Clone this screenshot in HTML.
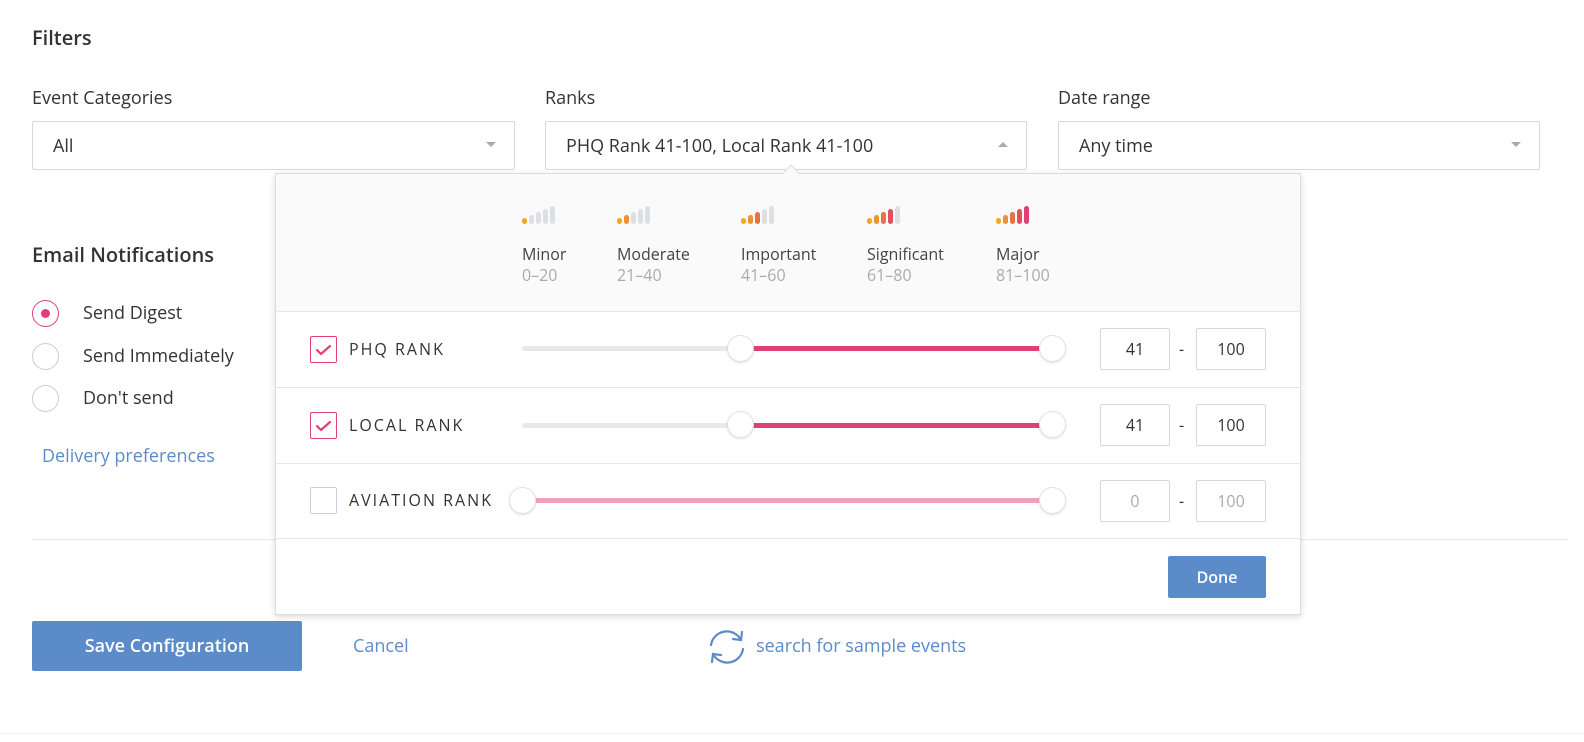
<!DOCTYPE html>
<html><head><style>
*{box-sizing:border-box;margin:0;padding:0}
body{width:1584px;height:742px;background:#fff;font-family:"Open Sans","Liberation Sans","DejaVu Sans",sans-serif;color:#333;position:relative;overflow:hidden}
.a{position:absolute;white-space:nowrap}
.sel{position:absolute;top:121px;height:49px;border:1px solid #d6d9dc;border-radius:2px;font-size:18px;padding:12px 20px;color:#333}
.car{position:absolute;right:18px;top:20px;width:0;height:0;border-left:5px solid transparent;border-right:5px solid transparent;border-top:5px solid #aaa}
.radio{position:absolute;left:32px;width:27px;height:27px;border:1px solid #ccc;border-radius:50%}
.bars{position:absolute;top:206px;height:18px}
.bars i{position:absolute;bottom:0;width:5px;border-radius:3px;background:#dde0e3}
.lvl{position:absolute;top:244px;font-size:16px;color:#444;line-height:21px}
.lvl span{display:block;color:#aaa}
.cb{position:absolute;left:310px;width:27px;height:27px;border:1px solid #e0407a;border-radius:2px}
.lab{position:absolute;left:349px;font-size:16px;letter-spacing:2px;color:#333}
.track{position:absolute;left:522px;width:530px;height:5px;background:#e8e9eb;border-radius:3px}
.fill{position:absolute;height:5px;background:#e0407a}
.th{position:absolute;width:27px;height:27px;border-radius:50%;background:#fff;border:1px solid #e2e2e2;box-shadow:0 1px 2px rgba(0,0,0,.12)}
.inp{position:absolute;width:70px;height:42px;border:1px solid #d6d9dc;border-radius:2px;font-size:16px;text-align:center;line-height:40px;color:#333}
.hr{position:absolute;left:275px;width:1026px;height:1px;background:#e6e6e6}
</style></head><body>
<div class="a" style="left:32px;top:24px;font-size:20px;font-weight:600;color:#333">Filters</div>
<div class="a" style="left:32px;top:86px;font-size:18px">Event Categories</div>
<div class="a" style="left:545px;top:86px;font-size:18px">Ranks</div>
<div class="a" style="left:1058px;top:86px;font-size:18px">Date range</div>
<div class="sel" style="left:32px;width:483px">All<div class="car"></div></div>
<div class="sel" style="left:545px;width:482px">PHQ Rank 41-100, Local Rank 41-100<div class="car" style="border-top:0;border-bottom:5px solid #aaa"></div></div>
<div class="sel" style="left:1058px;width:482px">Any time<div class="car"></div></div>

<div class="a" style="left:32px;top:241px;font-size:20px;font-weight:600">Email Notifications</div>
<div class="radio" style="top:300px;border-color:#e0407a"><div style="position:absolute;left:8px;top:8px;width:9px;height:9px;border-radius:50%;background:#e0407a"></div></div>
<div class="a" style="left:83px;top:301px;font-size:18px">Send Digest</div>
<div class="radio" style="top:343px"></div>
<div class="a" style="left:83px;top:344px;font-size:18px">Send Immediately</div>
<div class="radio" style="top:385px"></div>
<div class="a" style="left:83px;top:386px;font-size:18px">Don't send</div>
<div class="a" style="left:42px;top:444px;font-size:18px;color:#5b8cc9">Delivery preferences</div>
<div class="a" style="left:32px;top:539px;width:1536px;height:1px;background:#e8e8e8"></div>
<div class="a" style="left:32px;top:621px;width:270px;height:50px;background:#5b8cc9;border-radius:2px;color:#fff;font-size:18px;font-weight:600;text-align:center;line-height:50px">Save Configuration</div>
<div class="a" style="left:353px;top:634px;font-size:18px;color:#5b8cc9">Cancel</div>
<svg class="a" style="left:707px;top:627px" width="40" height="40" viewBox="0 0 40 40" fill="none" stroke="#5b8cc9" stroke-width="2.2" stroke-linecap="round"><path d="M4 18A16 16 0 0 1 34 13"/><path d="M35 5L34 13 26 12"/><path d="M36 22A16 16 0 0 1 6 27"/><path d="M5 35L6 27 14 28"/></svg>
<div class="a" style="left:756px;top:634px;font-size:18px;color:#5b8cc9">search for sample events</div>
<div class="a" style="left:0;top:733px;width:1584px;height:1px;background:#eee"></div>

<div class="a" style="left:275px;top:173px;width:1026px;height:442px;background:#fff;border:1px solid #ddd;box-shadow:0 2px 6px rgba(0,0,0,.15)"></div>
<div class="a" style="left:276px;top:174px;width:1024px;height:137px;background:#fafafa"></div>
<div class="a" style="left:785px;top:167px;width:12px;height:12px;background:#fafafa;border-left:1px solid #ddd;border-top:1px solid #ddd;transform:rotate(45deg)"></div>

<div class="bars" style="left:522px"><i style="left:0;height:6px;background:#f5a623"></i><i style="left:7px;height:9px"></i><i style="left:14px;height:12px"></i><i style="left:21px;height:15px"></i><i style="left:28px;height:18px"></i></div>
<div class="bars" style="left:617px"><i style="left:0;height:6px;background:#f5a623"></i><i style="left:7px;height:9px;background:#f0902f"></i><i style="left:14px;height:12px"></i><i style="left:21px;height:15px"></i><i style="left:28px;height:18px"></i></div>
<div class="bars" style="left:741px"><i style="left:0;height:6px;background:#f5a623"></i><i style="left:7px;height:9px;background:#f0902f"></i><i style="left:14px;height:12px;background:#e8704a"></i><i style="left:21px;height:15px"></i><i style="left:28px;height:18px"></i></div>
<div class="bars" style="left:867px"><i style="left:0;height:6px;background:#f5a623"></i><i style="left:7px;height:9px;background:#f0902f"></i><i style="left:14px;height:12px;background:#e8704a"></i><i style="left:21px;height:15px;background:#e0505e"></i><i style="left:28px;height:18px"></i></div>
<div class="bars" style="left:996px"><i style="left:0;height:6px;background:#f5a623"></i><i style="left:7px;height:9px;background:#f0902f"></i><i style="left:14px;height:12px;background:#e8704a"></i><i style="left:21px;height:15px;background:#e0505e"></i><i style="left:28px;height:18px;background:#e0407a"></i></div>
<div class="lvl" style="left:522px">Minor<span>0–20</span></div>
<div class="lvl" style="left:617px">Moderate<span>21–40</span></div>
<div class="lvl" style="left:741px">Important<span>41–60</span></div>
<div class="lvl" style="left:867px">Significant<span>61–80</span></div>
<div class="lvl" style="left:996px">Major<span>81–100</span></div>

<div class="hr" style="top:311px"></div>
<div class="hr" style="top:387px"></div>
<div class="hr" style="top:463px"></div>
<div class="hr" style="top:538px"></div>

<div class="cb" style="top:336px"><svg width="25" height="25" viewBox="0 0 25 25"><path d="M6 13l4 4 9-8" fill="none" stroke="#e0407a" stroke-width="2.2" stroke-linecap="round" stroke-linejoin="round"/></svg></div>
<div class="lab" style="top:338px">PHQ RANK</div>
<div class="track" style="top:346px"></div><div class="fill" style="left:740px;width:312px;top:346px"></div>
<div class="th" style="left:727px;top:335px"></div><div class="th" style="left:1039px;top:335px"></div>
<div class="inp" style="left:1100px;top:328px">41</div><div class="a" style="left:1179px;top:338px;font-size:16px">-</div><div class="inp" style="left:1196px;top:328px">100</div>

<div class="cb" style="top:412px"><svg width="25" height="25" viewBox="0 0 25 25"><path d="M6 13l4 4 9-8" fill="none" stroke="#e0407a" stroke-width="2.2" stroke-linecap="round" stroke-linejoin="round"/></svg></div>
<div class="lab" style="top:414px">LOCAL RANK</div>
<div class="track" style="top:423px"></div><div class="fill" style="left:740px;width:312px;top:423px"></div>
<div class="th" style="left:727px;top:411px"></div><div class="th" style="left:1039px;top:411px"></div>
<div class="inp" style="left:1100px;top:404px">41</div><div class="a" style="left:1179px;top:414px;font-size:16px">-</div><div class="inp" style="left:1196px;top:404px">100</div>

<div class="cb" style="top:487px;border-color:#ccd"></div>
<div class="lab" style="top:489px">AVIATION RANK</div>
<div class="fill" style="left:522px;width:530px;top:498px;background:#f0a0bd"></div>
<div class="th" style="left:509px;top:487px"></div><div class="th" style="left:1039px;top:487px"></div>
<div class="inp" style="left:1100px;top:480px;color:#aaa">0</div><div class="a" style="left:1179px;top:490px;font-size:16px">-</div><div class="inp" style="left:1196px;top:480px;color:#aaa">100</div>

<div class="a" style="left:1168px;top:556px;width:98px;height:42px;background:#5b8cc9;border-radius:2px;color:#fff;font-size:16px;font-weight:600;text-align:center;line-height:42px">Done</div>
</body></html>
